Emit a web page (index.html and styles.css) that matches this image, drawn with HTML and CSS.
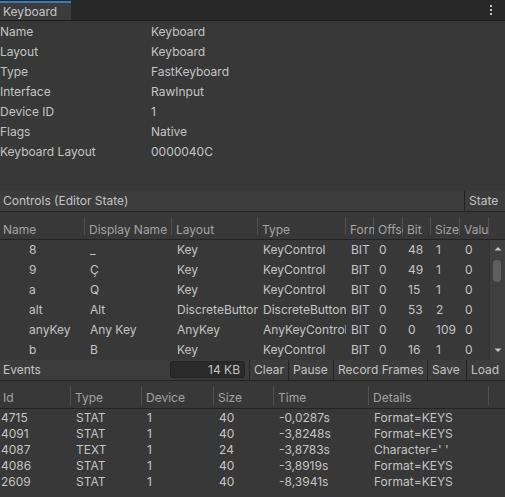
FILE: index.html
```html
<!DOCTYPE html>
<html lang="en">
<head>
  <meta charset="UTF-8" />
  <title>Input Debug</title>
  <link rel="stylesheet" href="styles.css">
</head>
<body>

  <div class="tabbar">
    <div class="tab">Keyboard</div>
    <svg class="menu-dots" width="4" height="12" viewBox="0 0 4 12">
      <rect x="1" y="1" width="2" height="2" />
      <rect x="1" y="5" width="2" height="2" />
      <rect x="1" y="9" width="2" height="2" />
    </svg>
  </div>

  <div class="props">
    <div class="prop"><span>Name</span><span>Keyboard</span></div>
    <div class="prop"><span>Layout</span><span>Keyboard</span></div>
    <div class="prop"><span>Type</span><span>FastKeyboard</span></div>
    <div class="prop"><span>Interface</span><span>RawInput</span></div>
    <div class="prop"><span>Device ID</span><span>1</span></div>
    <div class="prop"><span>Flags</span><span>Native</span></div>
    <div class="prop"><span>Keyboard Layout</span><span>0000040C</span></div>
  </div>

  <!-- controls -->
  <div class="toolbar">
    <span class="toolbar-label">Controls (Editor State)</span>
    <span class="tb-btn w-state">State</span>
  </div>

  <div class="head controls-cols">
    <div class="th first">Name</div>
    <div class="th">Display Name</div>
    <div class="th">Layout</div>
    <div class="th">Type</div>
    <div class="th">Format</div>
    <div class="th">Offset</div>
    <div class="th">Bit</div>
    <div class="th">Size</div>
    <div class="th">Value</div>
  </div>

  <div class="controls-body">
    <div class="rows">
      <div class="row controls-cols">
        <div class="td name">8</div><div class="td">_</div><div class="td">Key</div><div class="td">KeyControl</div>
        <div class="td">BIT</div><div class="td">0</div><div class="td">48</div><div class="td">1</div><div class="td">0</div>
      </div>
      <div class="row controls-cols">
        <div class="td name">9</div><div class="td">Ç</div><div class="td">Key</div><div class="td">KeyControl</div>
        <div class="td">BIT</div><div class="td">0</div><div class="td">49</div><div class="td">1</div><div class="td">0</div>
      </div>
      <div class="row controls-cols">
        <div class="td name">a</div><div class="td">Q</div><div class="td">Key</div><div class="td">KeyControl</div>
        <div class="td">BIT</div><div class="td">0</div><div class="td">15</div><div class="td">1</div><div class="td">0</div>
      </div>
      <div class="row controls-cols">
        <div class="td name">alt</div><div class="td">Alt</div><div class="td">DiscreteButton</div><div class="td">DiscreteButtonControl</div>
        <div class="td">BIT</div><div class="td">0</div><div class="td">53</div><div class="td">2</div><div class="td">0</div>
      </div>
      <div class="row controls-cols">
        <div class="td name">anyKey</div><div class="td">Any Key</div><div class="td">AnyKey</div><div class="td">AnyKeyControl</div>
        <div class="td">BIT</div><div class="td">0</div><div class="td">0</div><div class="td">109</div><div class="td">0</div>
      </div>
      <div class="row controls-cols">
        <div class="td name">b</div><div class="td">B</div><div class="td">Key</div><div class="td">KeyControl</div>
        <div class="td">BIT</div><div class="td">0</div><div class="td">16</div><div class="td">1</div><div class="td">0</div>
      </div>
    </div>
    <div class="scrollbar">
      <svg class="arrow" width="8" height="5" viewBox="0 0 8 5"><polygon points="0.5,4.5 4,1 7.5,4.5" /></svg>
      <div class="track"><div class="thumb"></div></div>
      <svg class="arrow" width="8" height="5" viewBox="0 0 8 5"><polygon points="0.5,0.5 7.5,0.5 4,4" /></svg>
    </div>
  </div>

  <!-- events -->
  <div class="toolbar">
    <span class="toolbar-label">Events</span>
    <span class="size-field">14 KB</span>
    <span class="tb-btn w-clear">Clear</span>
    <span class="tb-btn w-pause">Pause</span>
    <span class="tb-btn w-record">Record Frames</span>
    <span class="tb-btn w-save">Save</span>
    <span class="tb-btn w-load">Load</span>
  </div>

  <div class="head events-head events-cols">
    <div class="th first">Id</div>
    <div class="th">Type</div>
    <div class="th">Device</div>
    <div class="th">Size</div>
    <div class="th">Time</div>
    <div class="th">Details</div>
  </div>

  <div class="events-body">
    <div class="erow events-cols">
      <div class="td first">4715</div><div class="td">STAT</div><div class="td">1</div><div class="td">40</div><div class="td">-0,0287s</div><div class="td">Format=KEYS</div>
    </div>
    <div class="erow events-cols">
      <div class="td first">4091</div><div class="td">STAT</div><div class="td">1</div><div class="td">40</div><div class="td">-3,8248s</div><div class="td">Format=KEYS</div>
    </div>
    <div class="erow events-cols">
      <div class="td first">4087</div><div class="td">TEXT</div><div class="td">1</div><div class="td">24</div><div class="td">-3,8783s</div><div class="td">Character=' '</div>
    </div>
    <div class="erow events-cols">
      <div class="td first">4086</div><div class="td">STAT</div><div class="td">1</div><div class="td">40</div><div class="td">-3,8919s</div><div class="td">Format=KEYS</div>
    </div>
    <div class="erow events-cols">
      <div class="td first">2609</div><div class="td">STAT</div><div class="td">1</div><div class="td">40</div><div class="td">-8,3941s</div><div class="td">Format=KEYS</div>
    </div>
  </div>

</body>
</html>
```

FILE: styles.css
```css
:root {
  --bg: #383838;
  --bar: #3c3c3c;
  --dark-line: #232323;
  --sep: #505050;
  --text: #c4c4c4;
  --head-text: #a3a3a3;
}

* {
  box-sizing: border-box;
}

body {
  margin: 0;
  width: 505px;
  height: 497px;
  overflow: hidden;
  background: var(--bg);
  color: var(--text);
  font-family: Inter, "Noto Sans", sans-serif;
  font-size: 12px;
}

/* tab strip */
.tabbar {
  display: flex;
  justify-content: space-between;
  align-items: center;
  height: 21px;
  padding-top: 1px;
  background: #282828;
  border-bottom: 1px solid #1c1c1c;
}

.tab {
  align-self: stretch;
  width: 71px;
  padding-left: 3px;
  border-top: 2px solid #3a79bb;
  background: var(--bar);
  line-height: 17px;
}

.menu-dots {
  margin-right: 12px;
  margin-top: -2px;
  fill: #c4c4c4;
}

/* device properties */
.props {
  padding-top: 1px;
  margin-bottom: 29px;
}

.prop {
  display: grid;
  grid-template-columns: 151px 1fr;
  line-height: 20px;
  height: 20px;
}

/* toolbars */
.toolbar {
  display: flex;
  align-items: stretch;
  height: 21px;
  background: var(--bar);
  border-bottom: 1px solid var(--dark-line);
  line-height: 20px;
}

.toolbar-label {
  flex: 1;
  padding-left: 3px;
}

.tb-btn {
  flex: none;
  padding-left: 4px;
  border-left: 1px solid var(--dark-line);
  white-space: nowrap;
}

.w-state { width: 41px; }
.w-clear { width: 39px; }
.w-pause { width: 45px; }
.w-record { width: 94px; }
.w-save { width: 39px; }
.w-load { width: 39px; }

.size-field {
  width: 75px;
  height: 17px;
  margin: 1px 4px 0 0;
  padding-right: 4px;
  background: #2a2a2a;
  border: 1px solid #222;
  border-radius: 3px;
  text-align: right;
  line-height: 15px;
}

/* column headers */
.head {
  display: grid;
  height: 28px;
  border-bottom: 1px solid var(--dark-line);
  color: var(--head-text);
}

.th {
  padding: 11px 0 0 4px;
  line-height: 14px;
  white-space: nowrap;
  overflow: hidden;
  background: linear-gradient(var(--sep), var(--sep)) right 0 top 5px / 1px 18px no-repeat;
}

.th.first {
  padding-left: 3px;
}

.controls-cols {
  grid-template-columns: 85px 87px 86px 88px 28px 29px 28px 29px 29px;
}

.events-cols {
  grid-template-columns: 71px 71px 72px 60px 95px 120px;
}

.events-head .th {
  padding-top: 10px;
  background-size: 1px 19px;
}

/* controls table */
.controls-body {
  display: flex;
  height: 120px;
}

.rows {
  width: 489px;
}

.row {
  display: grid;
  height: 20px;
  line-height: 20px;
}

.td {
  padding-left: 5px;
  white-space: nowrap;
  overflow: hidden;
}

.td.name {
  padding-left: 29px;
}

.scrollbar {
  display: flex;
  flex-direction: column;
  align-items: center;
  width: 16px;
  background: #3f3f3f;
  border-left: 1px solid #333;
  padding: 6px 0 7px;
}

.arrow {
  fill: #c4c4c4;
  flex: none;
}

.track {
  flex: 1;
  width: 100%;
  padding: 9px 4px 0 3px;
}

.thumb {
  height: 22px;
  border-radius: 5px;
  background: #5f5f5f;
}

/* events table */
.events-body {
  padding-top: 1px;
}

.erow {
  display: grid;
  height: 16px;
  line-height: 16px;
}

.erow .td.first {
  padding-left: 1px;
}
```
